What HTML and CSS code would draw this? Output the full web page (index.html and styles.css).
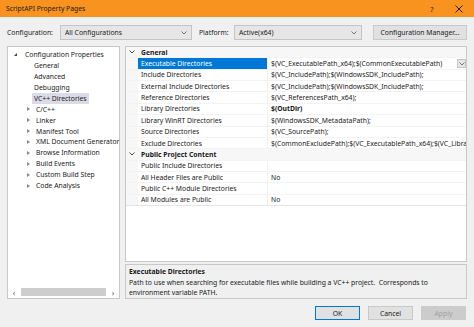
FILE: index.html
```html
<!DOCTYPE html>
<html lang="en">
<head>
    <meta charset="UTF-8">
    <title>ScriptAPI Property Pages</title>
    <link rel="stylesheet" href="styles.css">
</head>
<body>
    <div class="window">
        <div class="titlebar">
            <span class="title">ScriptAPI Property Pages</span>
            <span class="help">?</span>
            <span class="close">
                <svg width="8" height="8" viewBox="0 0 8 8"><path d="M0.5 0.5 L7.5 7.5 M7.5 0.5 L0.5 7.5" stroke="#222" stroke-width="1"/></svg>
            </span>
        </div>

        <div class="toolbar">
            <label class="config-label">Configuration:</label>
            <div class="combo combo-config">
                <span>All Configurations</span>
                <svg class="chev" width="6" height="4" viewBox="0 0 6 4"><path d="M0.5 0.5 L3 3 L5.5 0.5" fill="none" stroke="#666" stroke-width="0.9"/></svg>
            </div>
            <label class="platform-label">Platform:</label>
            <div class="combo combo-platform">
                <span>Active(x64)</span>
                <svg class="chev" width="6" height="4" viewBox="0 0 6 4"><path d="M0.5 0.5 L3 3 L5.5 0.5" fill="none" stroke="#666" stroke-width="0.9"/></svg>
            </div>
            <button class="btn btn-manager">Configuration Manager...</button>
        </div>

        <div class="main">
            <div class="tree-panel">
                <ul class="tree">
                    <li class="tree-root"><span class="expander-open"></span>Configuration Properties</li>
                    <li class="leaf">General</li>
                    <li class="leaf">Advanced</li>
                    <li class="leaf">Debugging</li>
                    <li class="leaf"><span class="selected">VC++ Directories</span></li>
                    <li class="branch"><span class="expander"></span>C/C++</li>
                    <li class="branch"><span class="expander"></span>Linker</li>
                    <li class="branch"><span class="expander"></span>Manifest Tool</li>
                    <li class="branch"><span class="expander"></span>XML Document Generator</li>
                    <li class="branch"><span class="expander"></span>Browse Information</li>
                    <li class="branch"><span class="expander"></span>Build Events</li>
                    <li class="branch"><span class="expander"></span>Custom Build Step</li>
                    <li class="branch"><span class="expander"></span>Code Analysis</li>
                </ul>
                <div class="hscroll">
                    <span class="arrow">&lsaquo;</span>
                    <div class="thumb"></div>
                    <span class="arrow">&rsaquo;</span>
                </div>
            </div>

            <div class="right">
                <div class="grid">
                    <div class="row category">
                        <span class="gutter"><svg width="6" height="4" viewBox="0 0 6 4"><path d="M0.5 0.5 L3 3 L5.5 0.5" fill="none" stroke="#333" stroke-width="0.9"/></svg></span>
                        <span class="cat-name">General</span>
                    </div>
                    <div class="row">
                        <span class="gutter"></span>
                        <span class="name active">Executable Directories</span>
                        <span class="value">$(VC_ExecutablePath_x64);$(CommonExecutablePath)
                            <span class="drop"><svg width="6" height="4" viewBox="0 0 6 4"><path d="M0.5 0.5 L3 3 L5.5 0.5" fill="none" stroke="#666" stroke-width="0.9"/></svg></span>
                        </span>
                    </div>
                    <div class="row">
                        <span class="gutter"></span>
                        <span class="name">Include Directories</span>
                        <span class="value">$(VC_IncludePath);$(WindowsSDK_IncludePath);</span>
                    </div>
                    <div class="row">
                        <span class="gutter"></span>
                        <span class="name">External Include Directories</span>
                        <span class="value">$(VC_IncludePath);$(WindowsSDK_IncludePath);</span>
                    </div>
                    <div class="row">
                        <span class="gutter"></span>
                        <span class="name">Reference Directories</span>
                        <span class="value">$(VC_ReferencesPath_x64);</span>
                    </div>
                    <div class="row">
                        <span class="gutter"></span>
                        <span class="name">Library Directories</span>
                        <span class="value bold">$(OutDir)</span>
                    </div>
                    <div class="row">
                        <span class="gutter"></span>
                        <span class="name">Library WinRT Directories</span>
                        <span class="value">$(WindowsSDK_MetadataPath);</span>
                    </div>
                    <div class="row">
                        <span class="gutter"></span>
                        <span class="name">Source Directories</span>
                        <span class="value">$(VC_SourcePath);</span>
                    </div>
                    <div class="row">
                        <span class="gutter"></span>
                        <span class="name">Exclude Directories</span>
                        <span class="value">$(CommonExcludePath);$(VC_ExecutablePath_x64);$(VC_LibraryPath_x64);</span>
                    </div>
                    <div class="row category">
                        <span class="gutter"><svg width="6" height="4" viewBox="0 0 6 4"><path d="M0.5 0.5 L3 3 L5.5 0.5" fill="none" stroke="#333" stroke-width="0.9"/></svg></span>
                        <span class="cat-name">Public Project Content</span>
                    </div>
                    <div class="row">
                        <span class="gutter"></span>
                        <span class="name">Public Include Directories</span>
                        <span class="value"></span>
                    </div>
                    <div class="row">
                        <span class="gutter"></span>
                        <span class="name">All Header Files are Public</span>
                        <span class="value">No</span>
                    </div>
                    <div class="row">
                        <span class="gutter"></span>
                        <span class="name">Public C++ Module Directories</span>
                        <span class="value"></span>
                    </div>
                    <div class="row">
                        <span class="gutter"></span>
                        <span class="name">All Modules are Public</span>
                        <span class="value">No</span>
                    </div>
                </div>

                <div class="desc">
                    <div class="desc-title">Executable Directories</div>
                    <p>Path to use when searching for executable files while building a VC++ project.&nbsp; Corresponds to environment variable PATH.</p>
                </div>
            </div>
        </div>

        <div class="footer">
            <button class="btn btn-ok">OK</button>
            <button class="btn">Cancel</button>
            <button class="btn btn-disabled">Apply</button>
        </div>
    </div>
</body>
</html>
```

FILE: styles.css
```css
* {
    margin: 0;
    padding: 0;
    box-sizing: border-box;
    font-family: "Noto Sans", "Open Sans", sans-serif;
}

body {
    width: 474px;
    height: 327px;
    overflow: hidden;
    background-color: #f0f0f0;
    font-size: 6.8px;
    color: #1a1a1a;
}

.window {
    width: 474px;
    height: 327px;
    display: flex;
    flex-direction: column;
}

/* title bar */
.titlebar {
    height: 17px;
    background-color: #f8931f;
    display: flex;
    align-items: center;
    padding-left: 6px;
}

.title {
    flex-grow: 1;
    color: #1a1a1a;
}

.help {
    width: 12px;
    text-align: center;
    margin-right: 15px;
    font-size: 7.5px;
}

.close {
    width: 12px;
    margin-right: 9px;
    display: flex;
    justify-content: center;
}

/* configuration row */
.toolbar {
    height: 15px;
    margin-top: 8px;
    padding-left: 7px;
    display: flex;
    align-items: center;
}

.config-label {
    width: 53px;
}

.platform-label {
    margin-left: 7px;
    width: 35px;
}

.combo {
    height: 15px;
    background-color: #e6e6e6;
    border: 1px solid #c4c4c4;
    display: flex;
    align-items: center;
    justify-content: space-between;
    padding: 0 4px 0 4px;
}

.combo-config {
    width: 132px;
}

.combo-platform {
    width: 128px;
}

.btn {
    height: 14px;
    width: 45px;
    background-color: #e1e1e1;
    border: 1px solid #c9c9c9;
    font-size: 6.8px;
    color: #1a1a1a;
}

.btn-manager {
    width: 94px;
    height: 15px;
    margin-left: 11px;
}

/* main area */
.main {
    display: flex;
    margin-top: 6px;
    padding-left: 7px;
    gap: 5px;
    height: 253px;
}

.tree-panel {
    width: 113px;
    background-color: #fff;
    border: 1px solid #c8c8c8;
    display: flex;
    flex-direction: column;
    justify-content: space-between;
}

.tree {
    list-style: none;
    padding-top: 2px;
}

.tree li {
    height: 10.95px;
    display: flex;
    align-items: center;
    white-space: nowrap;
}

.tree-root {
    padding-left: 6px;
}

.expander-open {
    width: 0;
    height: 0;
    border-left: 3px solid transparent;
    border-bottom: 3px solid #444;
    margin-right: 8px;
    margin-top: 1px;
}

.tree .leaf {
    padding-left: 26px;
}

.tree .branch {
    padding-left: 19px;
}

.expander {
    width: 0;
    height: 0;
    border-top: 2.5px solid transparent;
    border-bottom: 2.5px solid transparent;
    border-left: 3px solid #888;
    margin-right: 6px;
}

.selected {
    background-color: #dadbe8;
    padding: 1px 2px;
    margin-left: -2px;
}

.hscroll {
    height: 10px;
    margin-bottom: 1px;
    display: flex;
    align-items: center;
    padding: 0 3px;
    gap: 4px;
}

.hscroll .arrow {
    color: #555;
    font-size: 8px;
    width: 6px;
    text-align: center;
}

.thumb {
    flex-grow: 1;
    height: 8px;
    background-color: #cdcdcd;
}

.right {
    width: 342px;
    display: flex;
    flex-direction: column;
    gap: 2px;
}

/* property grid */
.grid {
    height: 216px;
    background-color: #fff;
    border: 1px solid #c8c8c8;
}

.row {
    height: 11.37px;
    display: grid;
    grid-template-columns: 12px 130px 1fr;
    align-items: stretch;
    border-bottom: 1px solid #f3f3f3;
}

.row:last-child {
    border-bottom-color: #e4e4e4;
}

.gutter {
    background-color: #f7f7f7;
    display: flex;
    align-items: center;
    justify-content: center;
}

.row span {
    display: flex;
    align-items: center;
    white-space: nowrap;
    overflow: hidden;
}

.cat-name {
    grid-column: 2 / 4;
    font-weight: bold;
    padding-left: 3px;
    background-color: #f7f7f7;
}

.name {
    padding-left: 3px;
    border-right: 1px solid #f0f0f0;
}

.name.active {
    background-color: #0078d7;
    color: #fff;
}

.value {
    padding-left: 3px;
    position: relative;
}

.bold {
    font-weight: bold;
}

.drop {
    position: absolute;
    right: 0;
    top: 1px;
    width: 9px;
    height: 9px;
    background-color: #e6e6e6;
    border: 1px solid #c4c4c4;
    justify-content: center;
}

/* description box */
.desc {
    height: 35px;
    border: 1px solid #c8c8c8;
    background-color: #f0f0f0;
    padding: 2px 3px;
}

.desc-title {
    font-weight: bold;
    line-height: 10px;
    margin-bottom: 1px;
}

.desc p {
    line-height: 10.3px;
}

/* buttons */
.footer {
    display: flex;
    justify-content: flex-end;
    gap: 8px;
    padding-right: 8px;
    margin-top: 7px;
}

.btn-ok {
    border-color: #0078d7;
}

.btn-disabled {
    background-color: #cccccc;
    border-color: #cccccc;
    color: #a0a0a0;
}
```
